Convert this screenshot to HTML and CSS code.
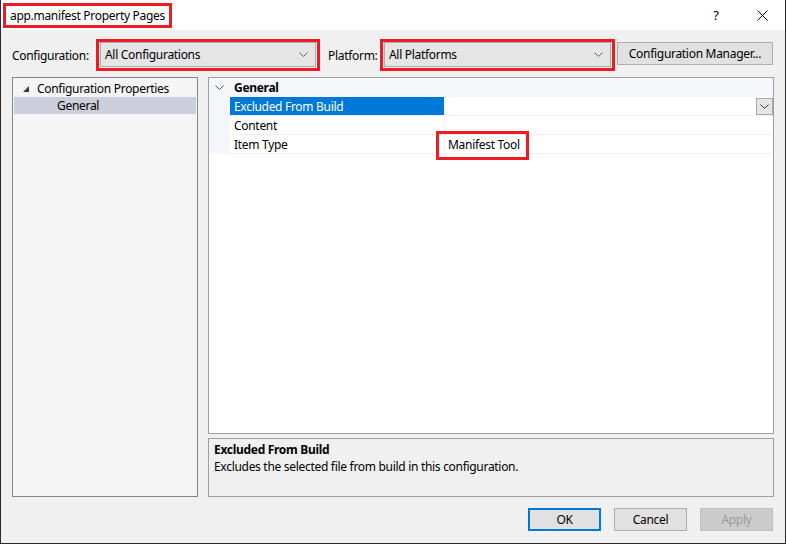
FILE: index.html
```html
<!doctype html>
<html>
<head>
  <title>app.manifest Property Pages</title>
  <link rel="stylesheet" href="styles.css">
</head>
<body>
  <div class="window">
    <div class="titlebar">
      <div class="title-mark">app.manifest Property Pages</div>
      <div class="caption">
        <span class="cap-btn">?</span>
        <span class="cap-btn">
          <svg width="11" height="11" viewBox="0 0 11 11"><path d="M0.5 0.5 L10.5 10.5 M10.5 0.5 L0.5 10.5" stroke="#000" stroke-width="1" fill="none"/></svg>
        </span>
      </div>
    </div>

    <div class="content">
      <!-- configuration / platform bar -->
      <div class="toolbar">
        <span class="label cfg-label">Configuration:</span>
        <div class="combo-mark cfg-mark">
          <div class="combo">
            <span>All Configurations</span>
            <svg width="9" height="5" viewBox="0 0 9 5"><polyline points="0.5,0.5 4.5,4.5 8.5,0.5" stroke="#606060" fill="none"/></svg>
          </div>
        </div>
        <span class="label plat-label">Platform:</span>
        <div class="combo-mark plat-mark">
          <div class="combo">
            <span>All Platforms</span>
            <svg width="9" height="5" viewBox="0 0 9 5"><polyline points="0.5,0.5 4.5,4.5 8.5,0.5" stroke="#606060" fill="none"/></svg>
          </div>
        </div>
        <button class="btn cfg-mgr">Configuration Manager...</button>
      </div>

      <div class="main">
        <!-- tree -->
        <div class="tree">
          <div class="tree-row">
            <svg class="expander" width="6" height="6" viewBox="0 0 6 6"><polygon points="6,0 6,6 0,6" fill="#3c3c3c"/></svg>
            <span>Configuration Properties</span>
          </div>
          <div class="tree-row child selected">General</div>
        </div>

        <div class="right">
          <!-- property grid -->
          <div class="grid">
            <div class="grid-row header">
              <div class="gutter">
                <svg width="9" height="5" viewBox="0 0 9 5"><polyline points="0.5,0.5 4.5,4.5 8.5,0.5" stroke="#555" fill="none"/></svg>
              </div>
              <div class="cat-name">General</div>
            </div>
            <div class="grid-row">
              <div class="gutter"></div>
              <div class="name selected">Excluded From Build</div>
              <div class="value">
                <span class="drop-btn">
                  <svg width="9" height="5" viewBox="0 0 9 5"><polyline points="0.5,0.5 4.5,4.5 8.5,0.5" stroke="#333" fill="none"/></svg>
                </span>
              </div>
            </div>
            <div class="grid-row">
              <div class="gutter"></div>
              <div class="name">Content</div>
              <div class="value"></div>
            </div>
            <div class="grid-row">
              <div class="gutter"></div>
              <div class="name">Item Type</div>
              <div class="value marked">Manifest Tool<div class="value-mark"></div></div>
            </div>
          </div>

          <!-- description -->
          <div class="desc">
            <div class="desc-title">Excluded From Build</div>
            <div class="desc-text">Excludes the selected file from build in this configuration.</div>
          </div>
        </div>
      </div>

      <div class="buttons">
        <button class="btn dlg default">OK</button>
        <button class="btn dlg">Cancel</button>
        <button class="btn dlg disabled">Apply</button>
      </div>
    </div>
  </div>
</body>
</html>
```

FILE: styles.css
```css
body{
  margin: 0;
  font-family: "Noto Sans", "Liberation Sans", sans-serif;
  font-size: 12px;
  letter-spacing: -0.3px;
  color: #000;
}
.window{
  width: 786px;
  height: 544px;
  box-sizing: border-box;
  border: 1px solid #2b2b2b;
  border-top: none;
  background-color: #f0f0f0;
  display: flex;
  flex-direction: column;
}
/* title bar */
.titlebar{
  height: 30px;
  background-color: #fff;
  display: flex;
  align-items: flex-start;
  justify-content: space-between;
}
.title-mark{
  margin: 3px 0 0 2px;
  width: 169px;
  height: 25px;
  box-sizing: border-box;
  border: 3px solid #ec1c24;
  padding-left: 4px;
  line-height: 19px;
  white-space: nowrap;
}
.caption{
  display: flex;
}
.cap-btn{
  width: 46px;
  height: 30px;
  display: flex;
  align-items: center;
  justify-content: center;
  font-size: 13px;
}
/* content */
.content{
  flex: 1;
  padding: 0 11px 0 11px;
  display: flex;
  flex-direction: column;
}
.toolbar{
  margin-top: 9px;
  height: 32px;
  display: flex;
  align-items: center;
}
.label{
  white-space: nowrap;
}
.cfg-label{
  width: 84px;
}
.plat-label{
  margin-left: 8px;
  width: 52px;
}
.combo-mark{
  height: 32px;
  box-sizing: border-box;
  border: 3px solid #ec1c24;
  padding: 0 1px 1px 1px;
}
.cfg-mark{
  width: 224px;
}
.plat-mark{
  width: 235px;
}
.combo{
  height: 25px;
  box-sizing: border-box;
  border: 1px solid #adadad;
  background-color: #e5e5e5;
  display: flex;
  align-items: center;
  justify-content: space-between;
  padding: 0 7px 0 4px;
}
.btn{
  font-family: inherit;
  font-size: 12px;
  letter-spacing: -0.3px;
  color: #000;
  background-color: #e1e1e1;
  border: 1px solid #adadad;
  padding: 0;
  box-sizing: border-box;
}
.cfg-mgr{
  margin-left: 2px;
  width: 156px;
  height: 23px;
  margin-top: -4px;
}
/* main area */
.main{
  margin-top: 6px;
  height: 420px;
  display: flex;
  gap: 10px;
}
.tree{
  width: 186px;
  box-sizing: border-box;
  border: 1px solid #828790;
  background-color: #f5f5f5;
  padding: 0 1px;
}
.tree-row{
  height: 19px;
  display: flex;
  align-items: center;
  white-space: nowrap;
  padding-top: 1px;
  box-sizing: border-box;
}
.expander{
  margin: 1px 8px 0 9px;
}
.tree-row.child{
  height: 17px;
  padding-top: 0;
  padding-left: 43px;
}
.tree-row.selected{
  background-color: #cccedb;
}
.right{
  flex: 1;
  display: flex;
  flex-direction: column;
  gap: 4px;
}
.grid{
  height: 357px;
  box-sizing: border-box;
  border: 1px solid #a0a0a0;
  background-color: #fff;
}
.grid-row{
  height: 19px;
  display: flex;
}
.grid-row.header{
  background-color: #f4f6fa;
  font-weight: bold;
}
.gutter{
  width: 21px;
  flex: none;
  background-color: #f4f6fa;
  display: flex;
  align-items: center;
  justify-content: center;
}
.cat-name{
  line-height: 20px;
  padding-left: 4px;
}
.name{
  width: 214px;
  flex: none;
  box-sizing: border-box;
  padding-left: 4px;
  line-height: 19px;
  border-bottom: 1px solid #f0f0f0;
}
.name.selected{
  background-color: #0078d7;
  color: #fff;
}
.value{
  flex: 1;
  position: relative;
  box-sizing: border-box;
  border-left: 1px solid #f0f0f0;
  border-bottom: 1px solid #f0f0f0;
  padding-left: 3px;
  line-height: 19px;
  display: flex;
  justify-content: flex-end;
  align-items: flex-start;
}
.value.marked{
  justify-content: flex-start;
}
.drop-btn{
  margin-top: 1px;
  width: 17px;
  height: 17px;
  box-sizing: border-box;
  border: 1px solid #a8a8a8;
  background-color: #e5e5e5;
  display: flex;
  align-items: center;
  justify-content: center;
}
.value-mark{
  position: absolute;
  left: -9px;
  top: -4px;
  width: 93px;
  height: 29px;
  box-sizing: border-box;
  border: 3px solid #ec1c24;
}
.desc{
  height: 59px;
  box-sizing: border-box;
  border: 1px solid #a0a0a0;
  padding: 2px 5px;
  line-height: 17px;
}
.desc-title{
  font-weight: bold;
}
/* dialog buttons */
.buttons{
  margin-top: 11px;
  display: flex;
  justify-content: flex-end;
  gap: 13px;
  padding-right: 1px;
}
.btn.dlg{
  width: 73px;
  height: 23px;
}
.btn.default{
  border: 2px solid #0078d7;
}
.btn.disabled{
  background-color: #cccccc;
  border-color: #bfbfbf;
  color: #9a9a9a;
}
```
